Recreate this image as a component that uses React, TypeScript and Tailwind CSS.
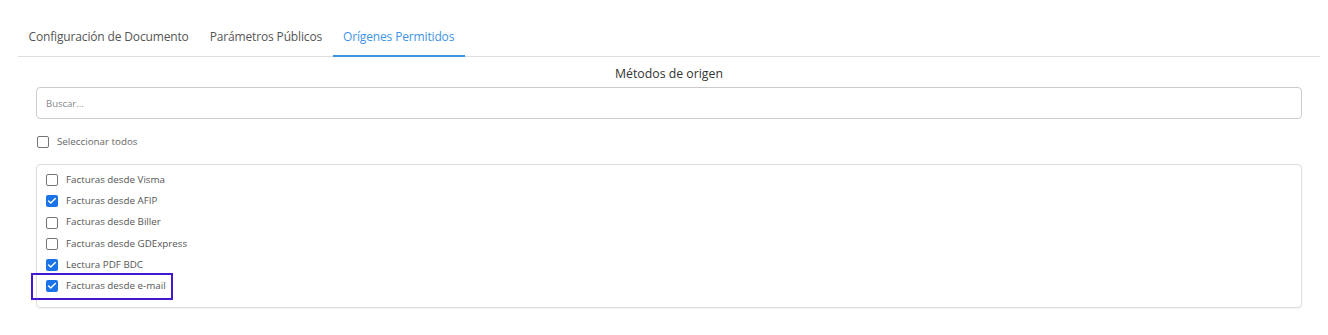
import { Check } from "lucide-react";

const tabs = ["Configuración de Documento", "Parámetros Públicos", "Orígenes Permitidos"];

const origins = [
  { label: "Facturas desde Visma", checked: false },
  { label: "Facturas desde AFIP", checked: true },
  { label: "Facturas desde Biller", checked: false },
  { label: "Facturas desde GDExpress", checked: false },
  { label: "Lectura PDF BDC", checked: true },
  { label: "Facturas desde e-mail", checked: true, highlight: true },
];

function Box({ checked }: { checked: boolean }) {
  return checked ? (
    <span className="flex h-3 w-3 shrink-0 items-center justify-center rounded-[2px] bg-[#1a73e8]">
      <Check size={10} strokeWidth={3.5} className="text-white" />
    </span>
  ) : (
    <span className="h-3 w-3 shrink-0 rounded-[2px] border border-[#767676] bg-white" />
  );
}

export default function App() {
  return (
    <div className="h-[335px] w-[1328px] bg-white font-['Open_Sans',sans-serif] text-[#555]">
      {/* Tabs */}
      <div className="ml-[18px] mr-[8px] flex border-b border-[#dedede] pt-[21px]">
        {tabs.map((t, i) => (
          <div
            key={t}
            className={`-mb-px px-[10.5px] pb-[9px] pt-[7px] text-[12px] tracking-[-0.15px] ${
              i === 2 ? "border-b-2 border-[#3c94e3] text-[#3c94e3]" : "border-b-2 border-transparent text-[#555]"
            }`}
          >
            {t}
          </div>
        ))}
      </div>

      <div className="ml-[36px] mr-[26px]">
        <div className="mt-[8px] text-center text-[12.3px] leading-[17px] text-[#333]">Métodos de origen</div>

        {/* Search */}
        <div className="mt-[5px] flex h-[32px] items-center rounded-[4px] border border-[#ccc] px-[9px] pt-[2px]">
          <span className="text-[9.5px] text-[#888]">Buscar...</span>
        </div>

        {/* Select all */}
        <div className="mt-[16px] flex items-center gap-[8px] pl-[1px]">
          <Box checked={false} />
          <span className="text-[9.8px] text-[#666]">Seleccionar todos</span>
        </div>

        {/* List */}
        <div className="mt-[14px] flex h-[144px] flex-col rounded-[4px] border border-[#ddd] pt-[5px] shadow-[0_1px_2px_rgba(0,0,0,0.06)]">
          {origins.map((o) => (
            <div key={o.label} className="relative flex h-[21.2px] items-center gap-[8px] pl-[9px]">
              <Box checked={o.checked} />
              <span className="text-[9.8px] text-[#555]">{o.label}</span>
              {o.highlight && (
                <span className="absolute left-[-6px] top-[-3px] h-[27px] w-[142px] border-2 border-[#4318d1]" />
              )}
            </div>
          ))}
        </div>
      </div>
    </div>
  );
}
